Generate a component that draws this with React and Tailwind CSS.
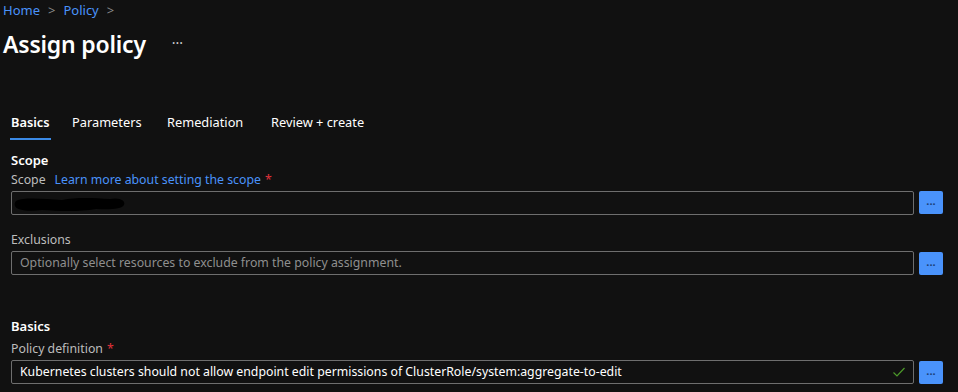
import React from "react";

function Field({ children, right, className = "" }) {
  return (
    <div className="flex items-center gap-[5px]">
      <div className={"relative flex-1 h-[24px] border border-[#6e6e6e] rounded-[2px] flex items-center px-[8px] " + className}>
        {children}
        {right}
      </div>
      <button className="w-[24px] h-[23px] bg-[#4a93fb] rounded-[2px] flex items-center justify-center text-[#1b3d75] text-[11px] font-bold leading-none pb-[4px]">
        ...
      </button>
    </div>
  );
}

export default function App() {
  return (
    <div className="w-[958px] h-[392px] bg-[#111111] text-white overflow-hidden" style={{ fontFamily: '"Noto Sans", "Open Sans", sans-serif' }}>
      <div className="pl-[3px] pt-[1px]">
        <div className="flex items-center gap-[8px] text-[13px] text-[#4a93fb] h-[20px]">
          <span>Home</span>
          <span className="text-[#8a8a8a]">&gt;</span>
          <span>Policy</span>
          <span className="text-[#8a8a8a]">&gt;</span>
        </div>
        <div className="flex items-center mt-[7px] h-[32px]">
          <h1 className="text-[23px] font-semibold tracking-[-0.2px]">Assign policy</h1>
          <span className="ml-[26px] text-[14px] text-[#cfcfcf] pb-[4px]">···</span>
        </div>
      </div>

      <div className="pl-[11px] pr-[15px]">
        <div className="flex items-start mt-[53px] text-[12.8px] leading-[19.5px]">
          <div className="flex flex-col w-[61px]">
            <div className="flex flex-col self-start">
              <span className="font-semibold">Basics</span>
              <div className="h-[2px] bg-[#3b8ae6] mt-[5px] -mx-[1px]"></div>
            </div>
          </div>
          <span className="w-[95px]">Parameters</span>
          <span className="w-[104px]">Remediation</span>
          <span>Review + create</span>
        </div>

        <div className="mt-[11px] text-[13px] leading-[19.5px] font-semibold">Scope</div>
        <div className="flex items-center text-[12.3px] leading-[19.5px]">
          <span className="text-[#bdbdbd]">Scope</span>
          <span className="ml-[9px] text-[#4a93fb]">Learn more about setting the scope</span>
          <span className="ml-[4px] text-[#e3323b]">*</span>
        </div>
        <div className="mt-[1px]">
          <Field>
            <div className="absolute left-[2px] top-[3px] w-[112px] h-[18px]">
              <svg width="112" height="18" viewBox="0 0 112 18">
                <path d="M2 6 C10 2 30 4 48 5 C62 2 80 3 96 4 C106 2 112 6 110 10 C108 14 96 15 82 14 C66 17 44 16 28 15 C14 17 2 15 1 11 C0 9 1 7 2 6 Z" fill="#000" />
              </svg>
            </div>
          </Field>
        </div>

        <div className="mt-[15px] text-[12.3px] leading-[19.5px] text-[#bdbdbd]">Exclusions</div>
        <div className="mt-[2px]">
          <Field>
            <span className="text-[12.3px] text-[#8f8f8f]">Optionally select resources to exclude from the policy assignment.</span>
          </Field>
        </div>

        <div className="mt-[42px] text-[13px] leading-[19.5px] font-semibold">Basics</div>
        <div className="flex items-center text-[12.3px] leading-[19.5px] mt-[2px]">
          <span className="text-[#bdbdbd]">Policy definition</span>
          <span className="ml-[4px] text-[#e3323b]">*</span>
        </div>
        <div className="mt-[2px]">
          <Field
            right={
              <svg className="absolute right-[8px] top-[6px]" width="12" height="10" viewBox="0 0 12 10">
                <path d="M0.5 5.5 L4 9 L11.5 1" stroke="#4c9a2a" strokeWidth="1.2" fill="none" />
              </svg>
            }
          >
            <span className="text-[12.3px] text-white">Kubernetes clusters should not allow endpoint edit permissions of ClusterRole/system:aggregate-to-edit</span>
          </Field>
        </div>
      </div>
    </div>
  );
}
